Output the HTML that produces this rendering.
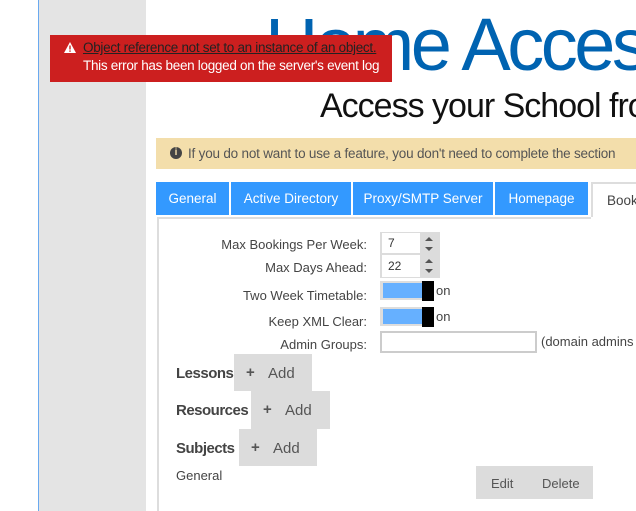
<!DOCTYPE html>
<html><head><meta charset="utf-8"><style>
*{box-sizing:border-box;margin:0;padding:0}
html,body{width:636px;height:511px;overflow:hidden}
body{background:#fff;font-family:"Liberation Sans",sans-serif;position:relative;color:#444}
.a{position:absolute;white-space:nowrap}
.tab{position:absolute;top:182px;height:33px;background:#3399ff;color:#fff;font-size:13.5px;line-height:33px;text-align:center}
.lbl{position:absolute;right:269px;font-size:13px;color:#444;text-align:right;white-space:nowrap}
.btn{position:absolute;background:#dcdcdc;color:#555;font-size:15px}
</style></head><body>
<div class="a" style="left:38px;top:0;width:1px;height:511px;background:#6aa9ef"></div>
<div class="a" style="left:39px;top:0;width:107px;height:511px;background:#e4e4e4"></div>
<div class="a" style="left:265px;top:2px;font-size:74px;color:#0063b1;letter-spacing:-3.5px">Home Access</div>
<div class="a" style="left:320px;top:87px;font-size:34px;color:#111;letter-spacing:-1px">Access your School fro</div>
<div class="a" style="left:50px;top:35px;width:342px;height:47px;background:#cc1f1f"></div>
<svg class="a" style="left:64px;top:42px" width="12" height="11" viewBox="0 0 12 11"><path d="M6 0L12 11H0Z" fill="#fff"/><rect x="5.3" y="3.5" width="1.4" height="4" fill="#cc1f1f"/><rect x="5.3" y="8.4" width="1.4" height="1.4" fill="#cc1f1f"/></svg>
<div class="a" style="left:83px;top:40px;font-size:13.5px;color:#222;text-decoration:underline;letter-spacing:-0.3px">Object reference not set to an instance of an object.</div>
<div class="a" style="left:83px;top:58px;font-size:13.5px;color:#fff;letter-spacing:-0.3px">This error has been logged on the server's event log</div>
<div class="a" style="left:156px;top:138px;width:480px;height:31px;background:#f3deab"></div>
<div class="a" style="left:170px;top:147px;width:12px;height:12px;border-radius:50%;background:#444;color:#f3deab;font-size:10px;font-weight:bold;text-align:center;line-height:12px">i</div>
<div class="a" style="left:188px;top:146px;font-size:13.5px;color:#555;letter-spacing:-0.2px">If you do not want to use a feature, you don't need to complete the section</div>
<div class="tab" style="left:156px;width:73px">General</div>
<div class="tab" style="left:231px;width:120px">Active Directory</div>
<div class="tab" style="left:353px;width:140px">Proxy/SMTP Server</div>
<div class="tab" style="left:495px;width:93px">Homepage</div>
<div class="a" style="left:591px;top:182px;width:45px;height:37px;border:2px solid #ddd;border-right:none;border-bottom:none;background:#fff;font-size:13.5px;line-height:33px;padding-left:14px;color:#444;overflow:hidden">Book</div>
<div class="a" style="left:157px;top:217px;width:479px;height:294px;border-left:2px solid #ddd;border-top:2px solid #ddd"></div>
<div class="a" style="left:591px;top:217px;width:45px;height:2px;background:#fff"></div>
<div class="lbl" style="top:237px">Max Bookings Per Week:</div>
<div class="lbl" style="top:260px">Max Days Ahead:</div>
<div class="lbl" style="top:288px">Two Week Timetable:</div>
<div class="lbl" style="top:314px">Keep XML Clear:</div>
<div class="lbl" style="top:337px">Admin Groups:</div>
<div class="a" style="left:380px;top:232px;width:60px;height:46px;background:#dcdcdc"></div>
<div class="a" style="left:382px;top:233px;width:38px;height:20px;background:#fff;font-size:12px;color:#333;padding:3px 6px">7</div>
<div class="a" style="left:382px;top:255px;width:38px;height:22px;background:#fff;font-size:12px;color:#333;padding:4px 6px">22</div>
<svg class="a" style="left:424px;top:235px" width="10" height="42"><path d="M1 6L5 2L9 6Z M1 12L5 16L9 12Z M1 28L5 24L9 28Z M1 34L5 38L9 34Z" fill="#555"/></svg>
<div class="a" style="left:380px;top:281px;width:42px;height:19px;background:#ddd"><div style="margin:2px 0 0 3px;width:39px;height:15px;background:#66b0ff"></div></div>
<div class="a" style="left:422px;top:281px;width:12px;height:20px;background:#000"></div>
<div class="a" style="left:436px;top:283px;font-size:13px;color:#444">on</div>
<div class="a" style="left:380px;top:307px;width:42px;height:19px;background:#ddd"><div style="margin:2px 0 0 3px;width:39px;height:15px;background:#66b0ff"></div></div>
<div class="a" style="left:422px;top:307px;width:12px;height:20px;background:#000"></div>
<div class="a" style="left:436px;top:309px;font-size:13px;color:#444">on</div>
<div class="a" style="left:380px;top:331px;width:157px;height:22px;border:2px solid #ccc;background:#fff"></div>
<div class="a" style="left:541px;top:334px;font-size:13px;color:#444">(domain admins</div>
<div class="a" style="left:176px;top:365px;font-size:15px;font-weight:bold;color:#444;letter-spacing:-0.5px">Lessons</div>
<div class="btn" style="left:234px;top:354px;width:78px;height:37px"><span class="a" style="left:12px;top:10px;font-weight:bold">+</span><span class="a" style="left:34px;top:11px">Add</span></div>
<div class="a" style="left:176px;top:402px;font-size:15px;font-weight:bold;color:#444;letter-spacing:-0.5px">Resources</div>
<div class="btn" style="left:251px;top:391px;width:79px;height:38px"><span class="a" style="left:12px;top:10px;font-weight:bold">+</span><span class="a" style="left:34px;top:11px">Add</span></div>
<div class="a" style="left:176px;top:440px;font-size:15px;font-weight:bold;color:#444;letter-spacing:-0.5px">Subjects</div>
<div class="btn" style="left:239px;top:429px;width:78px;height:37px"><span class="a" style="left:12px;top:10px;font-weight:bold">+</span><span class="a" style="left:34px;top:11px">Add</span></div>
<div class="a" style="left:176px;top:468px;font-size:13px;color:#444">General</div>
<div class="btn" style="left:476px;top:466px;width:117px;height:33px;font-size:13px"><span class="a" style="left:15px;top:10px">Edit</span><span class="a" style="left:66px;top:10px">Delete</span></div>
</body></html>
